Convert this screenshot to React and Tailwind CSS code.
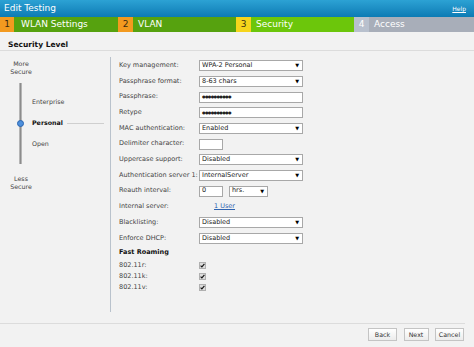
import React from 'react';

const rows = [
  { label: 'Key management:', kind: 'select', value: 'WPA-2 Personal' },
  { label: 'Passphrase format:', kind: 'select', value: '8-63 chars' },
  { label: 'Passphrase:', kind: 'password' },
  { label: 'Retype', kind: 'password' },
  { label: 'MAC authentication:', kind: 'select', value: 'Enabled' },
  { label: 'Delimiter character:', kind: 'small' },
  { label: 'Uppercase support:', kind: 'select', value: 'Disabled' },
  { label: 'Authentication server 1:', kind: 'select', value: 'InternalServer' },
  { label: 'Reauth interval:', kind: 'reauth' },
  { label: 'Internal server:', kind: 'link' },
  { label: 'Blacklisting:', kind: 'select', value: 'Disabled' },
  { label: 'Enforce DHCP:', kind: 'select', value: 'Disabled' },
];

const buttons = [
  { text: 'Back', w: 'w-[29px]' },
  { text: 'Next', w: 'w-[25px]' },
  { text: 'Cancel', w: 'w-[29px]' },
];

function Select({ value, width = 'w-[104px]' }) {
  return (
    <div className={`${width} h-[11px] bg-white border border-[#a8a8a8] flex items-center justify-between pl-[2px] pr-[3px] text-[6.5px] text-[#222]`}>
      <span>{value}</span>
      <span className="text-[5px] text-black">▼</span>
    </div>
  );
}

function Input({ value = '', width = 'w-[104px]' }) {
  return (
    <div className={`${width} h-[11px] bg-white border border-[#a8a8a8] flex items-center pl-[2px] text-[6.5px] text-[#222]`}>
      {value}
    </div>
  );
}

function Check() {
  return (
    <svg width="7" height="7" viewBox="0 0 7 7">
      <rect x="0.5" y="0.5" width="6" height="6" fill="#dcdcdc" stroke="#b0b0b0" />
      <path d="M1.6 3.6 L2.9 4.9 L5.4 1.8" fill="none" stroke="#111" strokeWidth="1.1" />
    </svg>
  );
}

function Control({ row }) {
  if (row.kind === 'select') return <Select value={row.value} />;
  if (row.kind === 'password')
    return <Input value={<span className="text-[4px] tracking-[-0.6px]">●●●●●●●●●●</span>} />;
  if (row.kind === 'small') return <Input width="w-[24px]" />;
  if (row.kind === 'reauth')
    return (
      <div className="flex items-center gap-[6px]">
        <Input value="0" width="w-[24px]" />
        <Select value="hrs." width="w-[39px]" />
      </div>
    );
  return <span className="ml-[15px] text-[6.5px] text-[#2f63b0] underline">1 User</span>;
}

export default function App() {
  return (
    <div className="w-[474px] h-[347px] bg-[#f2f2f2] overflow-hidden font-['DejaVu_Sans',sans-serif] text-[#333]">
      {/* title bar */}
      <div className="h-[17px] bg-linear-to-b from-[#2ca2d4] to-[#0b7bb4] flex items-center justify-between pl-[4px] pr-[8px] text-white">
        <span className="text-[9px]">Edit Testing</span>
        <span className="text-[6px] underline">Help</span>
      </div>

      {/* wizard tabs */}
      <div className="h-[15px] flex text-[9px] text-white">
        <div className="w-[118px] flex">
          <div className="w-[14px] bg-[#f39a1f] text-[#3a2a10] flex items-center justify-center">1</div>
          <div className="flex-1 bg-[#56a20f] pl-[7px] flex items-center">WLAN Settings</div>
        </div>
        <div className="w-[118px] flex">
          <div className="w-[15px] bg-[#f39a1f] text-[#3a2a10] flex items-center justify-center">2</div>
          <div className="flex-1 bg-[#56a20f] pl-[5px] flex items-center">VLAN</div>
        </div>
        <div className="w-[118px] flex">
          <div className="w-[15px] bg-[#f6d51c] text-[#3a3210] flex items-center justify-center">3</div>
          <div className="flex-1 bg-[#6cc60b] pl-[5px] flex items-center">Security</div>
        </div>
        <div className="flex-1 flex">
          <div className="w-[15px] bg-[#b8c0cd] flex items-center justify-center">4</div>
          <div className="flex-1 bg-[#a8aeb9] pl-[5px] flex items-center">Access</div>
        </div>
      </div>

      {/* section header */}
      <div className="h-[19px] border-b border-[#dcdcdc] pl-[8px] pt-[8px]">
        <div className="text-[7.5px] font-bold leading-[9px] text-[#111]">Security Level</div>
      </div>

      <div className="flex">
        {/* security level slider */}
        <div className="w-[110px] text-[6.3px] text-[#444]">
          <div className="w-[42px] pt-[9px] text-center leading-[8px]">
            More<br />Secure
          </div>
          <div className="flex mt-[7px]">
            <div className="relative ml-[19px] w-[3px] h-[81px] bg-[#8c8c8c] border-x border-[#b5b5b5]">
              <div className="absolute left-[-3px] top-[36.5px] w-[7px] h-[7px] rounded-full bg-[#4d8fdc] border border-[#2a65b0]" />
            </div>
            <div className="flex-1 pl-[10px] pt-[8.5px]">
              <div className="h-[21px] flex items-center">Enterprise</div>
              <div className="h-[21px] flex items-center gap-[4px] font-bold text-[#111]">
                <span>Personal</span>
                <div className="flex-1 h-px bg-[#cfcfcf] mr-[6px]" />
              </div>
              <div className="h-[21px] flex items-center">Open</div>
            </div>
          </div>
          <div className="w-[42px] mt-[11px] text-center leading-[8px]">
            Less<br />Secure
          </div>
        </div>

        {/* form */}
        <div className="flex-1 mt-[6px] h-[255px] border-l border-[#b9c2cc] pl-[8px] pt-[1px] text-[6.5px] text-[#444]">
          {rows.map((row) => (
            <div key={row.label} className="h-[15.7px] flex items-center">
              <div className="w-[80px] whitespace-nowrap">{row.label}</div>
              <Control row={row} />
            </div>
          ))}
          <div className="h-[14px] flex items-center font-bold text-[#111]">Fast Roaming</div>
          {['802.11r:', '802.11k:', '802.11v:'].map((l) => (
            <div key={l} className="h-[11px] flex items-center">
              <div className="w-[80px]">{l}</div>
              <Check />
            </div>
          ))}
        </div>
      </div>

      {/* footer */}
      <div className="mt-[11px] w-[465px] border-t border-[#dcdcdc] pt-[4px] pr-[1px] flex justify-end gap-[6.5px] text-[6.3px] text-[#333]">
        {buttons.map((b) => (
          <div
            key={b.text}
            className={`${b.w} h-[13px] flex items-center justify-center bg-linear-to-b from-white to-[#ececec] border border-[#c4c4c4]`}
          >
            {b.text}
          </div>
        ))}
      </div>
    </div>
  );
}
